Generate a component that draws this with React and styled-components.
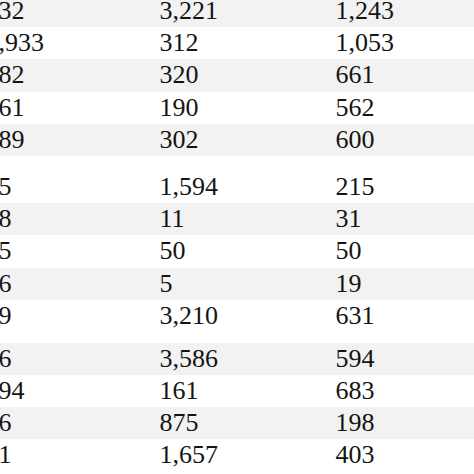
import styled, { createGlobalStyle } from 'styled-components';

const GlobalStyle = createGlobalStyle`
  html, body {
    margin: 0;
    padding: 0;
    background: #ffffff;
    overflow: hidden;
  }
`;

const Page = styled.div`
  width: 474px;
  height: 474px;
  overflow: hidden;
  background: #ffffff;
`;

// the table is cropped: first column and first row run off the left/top edge
const Table = styled.div`
  display: flex;
  flex-direction: column;
  margin-top: -5px;
  margin-left: -14.5px;
  font-family: "Liberation Serif", "Times New Roman", serif;
  font-size: 26px;
  color: #141414;
`;

const Row = styled.div`
  display: grid;
  grid-template-columns: 174px 176px 1fr;
  height: ${p => 32.2 + p.$padTop + p.$padBottom}px;
  padding-top: ${p => p.$padTop}px;
  padding-bottom: ${p => p.$padBottom}px;
  box-sizing: border-box;
  line-height: 32.2px;
  background: ${p => (p.$shaded ? '#f2f2f2' : '#ffffff')};
`;

const Cell = styled.div`
  white-space: nowrap;
`;

const rows = [
  ['832', '3,221', '1,243'],
  ['1,933', '312', '1,053'],
  ['282', '320', '661'],
  ['461', '190', '562'],
  ['389', '302', '600'],
  ['15', '1,594', '215', 15, 0],
  ['18', '11', '31'],
  ['45', '50', '50'],
  ['26', '5', '19'],
  ['19', '3,210', '631', 0, 11],
  ['16', '3,586', '594'],
  ['194', '161', '683'],
  ['26', '875', '198'],
  ['31', '1,657', '403'],
];

export default function App() {
  return (
    <Page>
      <GlobalStyle />
      <Table>
        {rows.map(([a, b, c, top = 0, bottom = 0], i) => (
          <Row key={i} $shaded={i % 2 === 0} $padTop={top} $padBottom={bottom}>
            <Cell>{a}</Cell>
            <Cell>{b}</Cell>
            <Cell>{c}</Cell>
          </Row>
        ))}
      </Table>
    </Page>
  );
}
